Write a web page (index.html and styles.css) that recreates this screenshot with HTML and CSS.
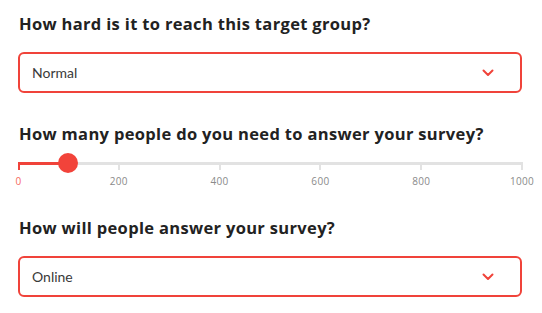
FILE: index.html
```html
<!DOCTYPE html>
<html>
<head>
<meta charset="utf-8">
<link rel="stylesheet" href="styles.css">
</head>
<body>
<div class="form">
  <div class="field">
    <h2 class="label">How hard is it to reach this target group?</h2>
    <div class="select">
      <span class="value">Normal</span>
      <svg class="chev" width="12" height="8" viewBox="0 0 12 8"><path d="M1.5 1.5 L6 6 L10.5 1.5" fill="none" stroke="#f0433a" stroke-width="2" stroke-linecap="round" stroke-linejoin="round"/></svg>
    </div>
  </div>
  <div class="field field-slider">
    <h2 class="label">How many people do you need to answer your survey?</h2>
    <div class="slider">
      <div class="track"></div>
      <div class="fill"></div>
      <div class="tick tick-active" style="left:0%"></div>
      <div class="tick" style="left:20%"></div>
      <div class="tick" style="left:40%"></div>
      <div class="tick" style="left:60%"></div>
      <div class="tick" style="left:80%"></div>
      <div class="tick" style="left:100%"></div>
      <div class="thumb" style="left:10%"></div>
      <span class="mark mark-active" style="left:0%">0</span>
      <span class="mark" style="left:20%">200</span>
      <span class="mark" style="left:40%">400</span>
      <span class="mark" style="left:60%">600</span>
      <span class="mark" style="left:80%">800</span>
      <span class="mark" style="left:100%">1000</span>
    </div>
  </div>
  <div class="field field-last">
    <h2 class="label">How will people answer your survey?</h2>
    <div class="select">
      <span class="value">Online</span>
      <svg class="chev" width="12" height="8" viewBox="0 0 12 8"><path d="M1.5 1.5 L6 6 L10.5 1.5" fill="none" stroke="#f0433a" stroke-width="2" stroke-linecap="round" stroke-linejoin="round"/></svg>
    </div>
  </div>
</div>
</body>
</html>
```
FILE: styles.css
```css
html, body { margin: 0; padding: 0; background: #fff; }
.form {
  width: 504px;
  padding: 12px 0 0 18px;
  display: flex;
  flex-direction: column;
}
.label {
  margin: 0;
  font-family: "Open Sans", "Noto Sans", sans-serif;
  font-weight: 700;
  font-size: 16.5px;
  line-height: 24px;
  letter-spacing: 0.33px;
  color: #222;
  padding-left: 1px;
}
.select {
  margin-top: 16px;
  height: 37px;
  border: 2px solid #f0433a;
  border-radius: 6px;
  display: flex;
  align-items: center;
  justify-content: space-between;
  padding: 0 26px 0 12px;
}
.value {
  font-family: "Lato", sans-serif;
  font-size: 14px;
  color: #3a3a3a;
}
.chev { display: block; }
.field-slider { margin-top: 29px; }
.slider {
  position: relative;
  height: 48px;
}
.track {
  position: absolute;
  left: 0; right: 0;
  top: 16px;
  height: 3px;
  background: #e2e2e2;
}
.fill {
  position: absolute;
  left: 0;
  width: 10%;
  top: 16px;
  height: 1px;
  background: #f0433a;
  border-bottom: 2px dotted #f0433a;
}
.tick {
  position: absolute;
  top: 16px;
  width: 2px;
  height: 8px;
  margin-left: -1px;
  background: #e2e2e2;
}
.tick-active { background: #f0433a; margin-left: 0; }
.thumb {
  position: absolute;
  top: 7px;
  width: 20px;
  height: 20px;
  margin-left: -10px;
  border-radius: 50%;
  background: #f2433a;
}
.mark {
  position: absolute;
  top: 28px;
  transform: translateX(-50%);
  font-family: "Open Sans", sans-serif;
  font-size: 10px;
  letter-spacing: 0.3px;
  color: #8a8a8a;
}
.mark-active { color: #f66a60; transform: translateX(-40%); }
.field-last { margin-top: 22px; }
```
